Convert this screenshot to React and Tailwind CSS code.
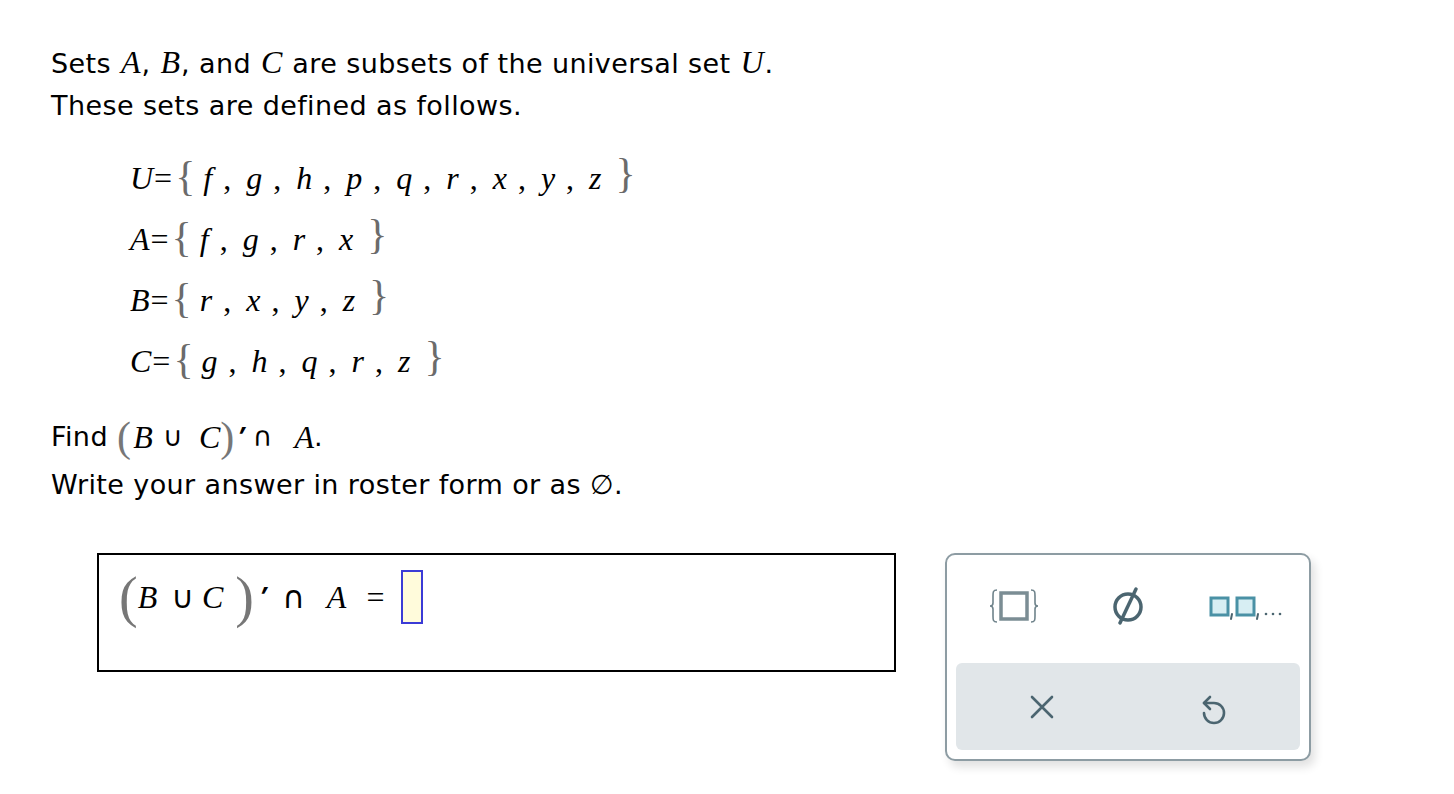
import React from "react";

const sans = "font-['DejaVu_Sans',Verdana,sans-serif]";
const serif = "font-['Liberation_Serif','Times_New_Roman',serif]";

function V({ children, className = "" }) {
  return <span className={`${serif} italic tracking-normal ${className}`}>{children}</span>;
}

function Brace({ children }) {
  return (
    <span className={`${serif} text-[42px] text-[#6b6b6b] font-light leading-none relative top-[-2px]`}>
      {children}
    </span>
  );
}

function Prime({ className = "" }) {
  return (
    <span className={`font-['Liberation_Sans',Arial,sans-serif] font-bold text-[26px] leading-none relative top-[-1px] inline-block skew-x-[-15deg] ${className}`}>
      ′
    </span>
  );
}

function SetLine({ name, items }) {
  return (
    <div className={`h-[61px] flex items-center ${serif} text-[32px] text-black`}>
      <V>{name}</V>
      <span className="ml-[1px] mr-[3px]">=</span>
      <Brace>{"{"}</Brace>
      {items.map((it, i) => (
        <span key={i} className="flex items-center">
          <V className={i === 0 ? "ml-[8px]" : "ml-[15px]"}>{it}</V>
          {i < items.length - 1 && <span className="ml-[11px]">,</span>}
        </span>
      ))}
      <span className="ml-[14px]">
        <Brace>{"}"}</Brace>
      </span>
    </div>
  );
}

function BraceBoxIcon() {
  return (
    <svg width="52" height="38" viewBox="0 0 52 38" fill="none">
      <path d="M9 3 C5 3 5 5 5 9 L5 16 C5 18 4 19 2 19 C4 19 5 20 5 22 L5 29 C5 33 5 35 9 35" stroke="#6f838b" strokeWidth="1.6" />
      <path d="M43 3 C47 3 47 5 47 9 L47 16 C47 18 48 19 50 19 C48 19 47 20 47 22 L47 29 C47 33 47 35 43 35" stroke="#6f838b" strokeWidth="1.6" />
      <rect x="13" y="6" width="26" height="26" stroke="#7b8d94" strokeWidth="3.5" />
    </svg>
  );
}

function EmptySetIcon() {
  return (
    <svg width="40" height="40" viewBox="0 0 40 40" fill="none">
      <circle cx="20" cy="21" r="13" stroke="#4b6570" strokeWidth="3.5" />
      <line x1="28" y1="3" x2="12" y2="37" stroke="#4b6570" strokeWidth="3.5" strokeLinecap="round" />
    </svg>
  );
}

function ListIcon() {
  return (
    <svg width="76" height="30" viewBox="0 0 76 30" fill="none">
      <rect x="2" y="6" width="17" height="17" fill="#d7eef3" stroke="#4a91a5" strokeWidth="3" />
      <rect x="28" y="6" width="17" height="17" fill="#d7eef3" stroke="#4a91a5" strokeWidth="3" />
      <path d="M23 22 L22 27" stroke="#4b6570" strokeWidth="2" strokeLinecap="round" />
      <path d="M49 22 L48 27" stroke="#4b6570" strokeWidth="2" strokeLinecap="round" />
      <circle cx="57" cy="22" r="1.3" fill="#4b6570" />
      <circle cx="64" cy="22" r="1.3" fill="#4b6570" />
      <circle cx="71" cy="22" r="1.3" fill="#4b6570" />
    </svg>
  );
}

function XIcon() {
  return (
    <svg width="30" height="30" viewBox="0 0 30 30" fill="none">
      <path d="M5 5 L25 25 M25 5 L5 25" stroke="#4b6570" strokeWidth="2.6" strokeLinecap="round" />
    </svg>
  );
}

function UndoIcon() {
  return (
    <svg width="34" height="34" viewBox="0 0 34 34" fill="none">
      <path d="M13 6 L7 12 L13 18" stroke="#4b6570" strokeWidth="2.6" strokeLinecap="round" strokeLinejoin="round" />
      <path d="M7 12 L17 12 A10 10 0 1 1 7 22" stroke="#4b6570" strokeWidth="2.6" strokeLinecap="round" />
    </svg>
  );
}

const paren = `${serif} text-[#777] font-light leading-none`;

export default function App() {
  return (
    <div className={`min-h-screen bg-white text-black ${sans} text-[27px] tracking-[0.4px] pl-[51px] pt-[41px]`}>
      <p className="leading-[42px]">
        Sets <V className="text-[32px] mx-[1px]">A</V>, <V className="text-[32px] mx-[1px]">B</V>, and{" "}
        <V className="text-[32px] mx-[1px]">C</V> are subsets of the universal set{" "}
        <V className="text-[32px] mx-[1px]">U</V>.
      </p>
      <p className="leading-[42px]">These sets are defined as follows.</p>

      <div className="ml-[79px] mt-[20px] tracking-normal">
        <SetLine name="U" items={["f", "g", "h", "p", "q", "r", "x", "y", "z"]} />
        <SetLine name="A" items={["f", "g", "r", "x"]} />
        <SetLine name="B" items={["r", "x", "y", "z"]} />
        <SetLine name="C" items={["g", "h", "q", "r", "z"]} />
      </div>

      <p className="mt-[22px] leading-[48px] flex items-center">
        <span>Find&nbsp;</span>
        <span className={`${paren} text-[42px]`}>(</span>
        <V className="ml-[2px] text-[32px]">B</V>
        <span className="ml-[10px] mr-[16px]">∪</span>
        <V className="text-[32px]">C</V>
        <span className={`${paren} text-[42px]`}>)</span>
        <Prime className="ml-[3px]" />
        <span className="ml-[8px]">∩</span>
        <V className="ml-[22px] text-[32px]">A</V>
        <span>.</span>
      </p>
      <p className="leading-[48px]">Write your answer in roster form or as ∅.</p>

      <div className="flex items-start mt-[44px] ml-[46px] tracking-normal">
        <div className="w-[799px] h-[119px] border-2 border-black pt-[14px] pl-[20px]">
          <div className="flex items-center h-[56px]">
            <span className={`${paren} text-[56px]`}>(</span>
            <V className="text-[32px]">B</V>
            <span className="ml-[14px] text-[31px]">∪</span>
            <V className="ml-[8px] text-[32px]">C</V>
            <span className={`${paren} ml-[12px] text-[56px]`}>)</span>
            <Prime className="ml-[6px]" />
            <span className="ml-[16px] text-[31px]">∩</span>
            <V className="ml-[22px] text-[32px]">A</V>
            <span className={`${serif} ml-[20px] text-[32px]`}>=</span>
            <span className="ml-[17px] w-[22px] h-[54px] bg-[#fffbdb] border-2 border-[#3b3bd6]"></span>
          </div>
        </div>

        <div className="ml-[49px] w-[366px] h-[208px] border-2 border-[#8d9ca3] rounded-[10px] bg-white shadow-[4px_6px_10px_rgba(0,0,0,0.12)] flex flex-col px-[9px] pb-[9px]">
          <div className="flex-1 grid grid-cols-3 items-center pb-[6px]">
            <div className="flex justify-center pl-[2px]">
              <BraceBoxIcon />
            </div>
            <div className="flex justify-center">
              <EmptySetIcon />
            </div>
            <div className="flex justify-center pl-[8px] pt-[2px]">
              <ListIcon />
            </div>
          </div>
          <div className="h-[87px] bg-[#e1e6e9] rounded-[6px] grid grid-cols-2 items-center">
            <div className="flex justify-center">
              <XIcon />
            </div>
            <div className="flex justify-center pt-[2px]">
              <UndoIcon />
            </div>
          </div>
        </div>
      </div>
    </div>
  );
}
